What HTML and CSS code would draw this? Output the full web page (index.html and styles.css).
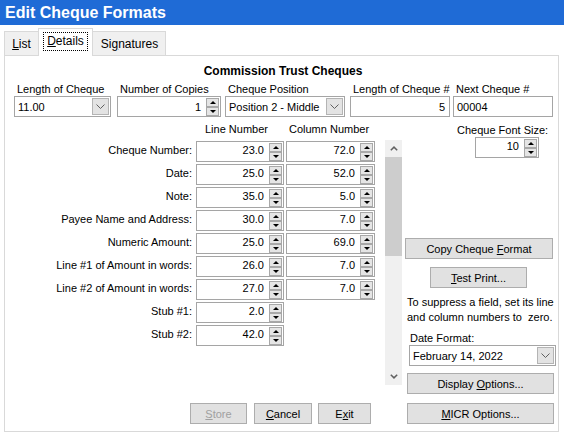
FILE: index.html
```html
<!DOCTYPE html>
<html>
<head>
<meta charset="utf-8">
<title>Edit Cheque Formats</title>
<link rel="stylesheet" href="styles.css">
</head>
<body>
<div class="titlebar">Edit Cheque Formats</div>
<div class="tabs">
  <div class="tab tab-list"><u>L</u>ist</div>
  <div class="tab tab-details"><span class="focus"><u>D</u>etails</span></div>
  <div class="tab tab-sig">Si<u>g</u>natures</div>
</div>
<div class="panel">
  <div class="heading">Commission Trust Cheques</div>
  <div class="toprow">
    <div class="field f1">
      <div class="flabel">Length of Cheque</div>
      <div class="box combo"><span>11.00</span><span class="dd"><svg width="9" height="5" viewBox="0 0 9 5"><path d="M0.5 0.5 L4.5 4.5 L8.5 0.5" stroke="#606060" fill="none"/></svg></span></div>
    </div>
    <div class="field f2">
      <div class="flabel">Number of Copies</div>
      <div class="box num spinbox"><span>1</span><span class="spin"><span class="up"><i></i></span><span class="down"><i></i></span></span></div>
    </div>
    <div class="field f3">
      <div class="flabel">Cheque Position</div>
      <div class="box combo"><span>Position 2 - Middle</span><span class="dd"><svg width="9" height="5" viewBox="0 0 9 5"><path d="M0.5 0.5 L4.5 4.5 L8.5 0.5" stroke="#606060" fill="none"/></svg></span></div>
    </div>
    <div class="field f4">
      <div class="flabel">Length of Cheque #</div>
      <div class="box num plain"><span>5</span></div>
    </div>
    <div class="field f5">
      <div class="flabel">Next Cheque #</div>
      <div class="box text"><span>00004</span></div>
    </div>
  </div>

  <div class="main">
    <div class="left">
      <div class="hdr">
        <div class="lbl"></div>
        <div class="hline">Line Number</div>
        <div class="hcol">Column Number</div>
      </div>
      <div class="row"><div class="lbl">Cheque Number:</div><div class="box num spinbox line"><span>23.0</span><span class="spin"><span class="up"><i></i></span><span class="down"><i></i></span></span></div><div class="box num spinbox col"><span>72.0</span><span class="spin"><span class="up"><i></i></span><span class="down"><i></i></span></span></div></div>
      <div class="row"><div class="lbl">Date:</div><div class="box num spinbox line"><span>25.0</span><span class="spin"><span class="up"><i></i></span><span class="down"><i></i></span></span></div><div class="box num spinbox col"><span>52.0</span><span class="spin"><span class="up"><i></i></span><span class="down"><i></i></span></span></div></div>
      <div class="row"><div class="lbl">Note:</div><div class="box num spinbox line"><span>35.0</span><span class="spin"><span class="up"><i></i></span><span class="down"><i></i></span></span></div><div class="box num spinbox col"><span>5.0</span><span class="spin"><span class="up"><i></i></span><span class="down"><i></i></span></span></div></div>
      <div class="row"><div class="lbl">Payee Name and Address:</div><div class="box num spinbox line"><span>30.0</span><span class="spin"><span class="up"><i></i></span><span class="down"><i></i></span></span></div><div class="box num spinbox col"><span>7.0</span><span class="spin"><span class="up"><i></i></span><span class="down"><i></i></span></span></div></div>
      <div class="row"><div class="lbl">Numeric Amount:</div><div class="box num spinbox line"><span>25.0</span><span class="spin"><span class="up"><i></i></span><span class="down"><i></i></span></span></div><div class="box num spinbox col"><span>69.0</span><span class="spin"><span class="up"><i></i></span><span class="down"><i></i></span></span></div></div>
      <div class="row"><div class="lbl">Line #1 of Amount in words:</div><div class="box num spinbox line"><span>26.0</span><span class="spin"><span class="up"><i></i></span><span class="down"><i></i></span></span></div><div class="box num spinbox col"><span>7.0</span><span class="spin"><span class="up"><i></i></span><span class="down"><i></i></span></span></div></div>
      <div class="row"><div class="lbl">Line #2 of Amount in words:</div><div class="box num spinbox line"><span>27.0</span><span class="spin"><span class="up"><i></i></span><span class="down"><i></i></span></span></div><div class="box num spinbox col"><span>7.0</span><span class="spin"><span class="up"><i></i></span><span class="down"><i></i></span></span></div></div>
      <div class="row"><div class="lbl">Stub #1:</div><div class="box num spinbox line"><span>2.0</span><span class="spin"><span class="up"><i></i></span><span class="down"><i></i></span></span></div></div>
      <div class="row"><div class="lbl">Stub #2:</div><div class="box num spinbox line"><span>42.0</span><span class="spin"><span class="up"><i></i></span><span class="down"><i></i></span></span></div></div>
      <div class="actions">
        <div class="btn store disabled"><span><u>S</u>tore</span></div>
        <div class="btn cancel"><span><u>C</u>ancel</span></div>
        <div class="btn exit"><span>E<u>x</u>it</span></div>
      </div>
    </div>

    <div class="scrollbar">
      <div class="sb-arrow"><svg width="8" height="5" viewBox="0 0 8 5"><path d="M0.8 4.3 L4 1.1 L7.2 4.3" stroke="#606060" stroke-width="1.5" fill="none"/></svg></div>
      <div class="sb-thumb"></div>
      <div class="sb-track"></div>
      <div class="sb-arrow"><svg width="8" height="5" viewBox="0 0 8 5"><path d="M0.8 0.7 L4 3.9 L7.2 0.7" stroke="#606060" stroke-width="1.5" fill="none"/></svg></div>
    </div>

    <div class="right">
      <div class="fs-label">Cheque Font Size:</div>
      <div class="box num spinbox fs-box"><span>10</span><span class="spin"><span class="up"><i></i></span><span class="down"><i></i></span></span></div>
      <div class="btn copy"><span>Copy Cheque <u>F</u>ormat</span></div>
      <div class="btn test"><span><u>T</u>est Print...</span></div>
      <div class="note">To suppress a field, set its line<br>and column numbers to &nbsp;zero.</div>
      <div class="df-label">Date Format:</div>
      <div class="box combo df-combo"><span>February 14, 2022</span><span class="dd"><svg width="9" height="5" viewBox="0 0 9 5"><path d="M0.5 0.5 L4.5 4.5 L8.5 0.5" stroke="#606060" fill="none"/></svg></span></div>
      <div class="btn display"><span>Display <u>O</u>ptions...</span></div>
      <div class="btn micr"><span><u>M</u>ICR Options...</span></div>
    </div>
  </div>
</div>
</body>
</html>
```
FILE: styles.css
```css
* { box-sizing: border-box; }

body {
  margin: 0;
  width: 564px;
  height: 434px;
  overflow: hidden;
  background: #ffffff;
  font-family: "Liberation Sans", Arial, sans-serif;
  font-size: 11px;
  color: #000;
}

u { text-decoration: underline; text-underline-offset: 1px; }

.titlebar {
  height: 25px;
  line-height: 25px;
  padding-left: 5px;
  background: #1f6bd6;
  color: #fff;
  font-size: 16px;
  font-weight: bold;
}

.tabs {
  display: flex;
  align-items: flex-end;
  height: 30px;
  padding-left: 4px;
}

.tab {
  height: 24px;
  border: 1px solid #d9d9d9;
  border-bottom: none;
  background: #f0f0f0;
  font-size: 12px;
  display: flex;
  align-items: center;
  justify-content: center;
}

.tab-list { width: 34px; border-right: none; }
.tab-sig { width: 73px; border-left: none; padding-left: 1px; }

.tab-details {
  width: 55px;
  height: 28px;
  background: #fff;
  margin-bottom: -1px;
  position: relative;
  z-index: 1;
}

.focus {
  border: 1px dotted #000;
  padding: 2px 3px;
  line-height: 13px;
  margin-top: -2px;
}

.panel {
  margin-left: 4px;
  width: 555px;
  height: 377px;
  border: 1px solid #d9d9d9;
  padding-top: 7px;
}

.heading {
  height: 16px;
  line-height: 16px;
  text-align: center;
  font-size: 12px;
  font-weight: bold;
  padding-left: 3px;
}

.toprow {
  display: flex;
  margin-top: 4px;
  padding-left: 9px;
}

.field { display: flex; flex-direction: column; }
.f1 { width: 97px; }
.f2 { width: 104px; margin-left: 6px; }
.f3 { width: 120px; margin-left: 4px; }
.f4 { width: 100px; margin-left: 5px; }
.f5 { width: 100px; margin-left: 3px; }

.flabel {
  height: 13px;
  line-height: 13px;
  padding-left: 3px;
  white-space: nowrap;
}

.box {
  height: 21px;
  border: 1px solid #a5a5a5;
  background: #fff;
  display: flex;
  align-items: center;
  padding: 0 3px;
  white-space: nowrap;
}

.box.num { justify-content: flex-end; }
.box.plain { padding-right: 4px; }
.box.spinbox { padding-right: 1px; }

.row .box > span:first-child,
.fs-box > span:first-child { padding-bottom: 3px; }

.combo { justify-content: space-between; padding-right: 1px; }

.dd {
  width: 17px;
  height: 17px;
  border: 1px solid #b4b4b4;
  background: #e3e3e3;
  display: flex;
  align-items: center;
  justify-content: center;
}

.spin {
  display: flex;
  flex-direction: column;
  width: 13px;
  margin-left: 5px;
}

.spin > span {
  height: 9px;
  border: 1px solid #a8a8a8;
  background: #e5e5e5;
  display: flex;
  align-items: center;
  justify-content: center;
}

.spin i {
  display: block;
  width: 0;
  height: 0;
  border-left: 3px solid transparent;
  border-right: 3px solid transparent;
}

.spin .up i { border-bottom: 3px solid #000; }
.spin .down i { border-top: 3px solid #000; }

.main {
  display: flex;
  margin-top: 6px;
}

.left {
  width: 371px;
  display: flex;
  flex-direction: column;
}

.hdr {
  display: flex;
  height: 13px;
  line-height: 13px;
  margin-bottom: 5px;
}

.hline { width: 88px; margin-left: 4px; padding-left: 9px; white-space: nowrap; }
.hcol { width: 89px; margin-left: 2px; padding-left: 3px; white-space: nowrap; }

.row {
  display: flex;
  height: 21px;
  margin-bottom: 2px;
}

.lbl {
  width: 187px;
  text-align: right;
  line-height: 18px;
  white-space: nowrap;
}

.line { width: 88px; margin-left: 4px; }
.col { width: 89px; margin-left: 2px; }

.actions {
  display: flex;
  margin-top: 55px;
  padding-left: 185px;
}

.btn {
  height: 21px;
  border: 1px solid #adadad;
  background: #e1e1e1;
  display: flex;
  align-items: center;
  justify-content: center;
  white-space: nowrap;
}

.btn.disabled { color: #a0a0a0; }
.store { width: 57px; }
.cancel { width: 58px; margin-left: 7px; }
.exit { width: 53px; margin-left: 6px; }

.scrollbar {
  width: 17px;
  height: 245px;
  margin-left: 9px;
  margin-top: 17px;
  display: flex;
  flex-direction: column;
  background: #f0f0f0;
}

.sb-arrow {
  height: 17px;
  display: flex;
  align-items: center;
  justify-content: center;
}

.sb-thumb { height: 99px; background: #cdcdcd; }
.sb-track { flex: 1; }

.right {
  width: 151px;
  margin-left: 3px;
  display: flex;
  flex-direction: column;
  align-items: flex-start;
}

.fs-label {
  margin-top: 1px;
  margin-left: 52px;
  height: 13px;
  line-height: 13px;
  white-space: nowrap;
}

.fs-box { width: 64px; margin-left: 70px; }

.copy { width: 148px; margin-top: 80px; }
.test { width: 97px; margin-top: 8px; margin-left: 25px; }

.note {
  margin-top: 7px;
  padding-left: 2px;
  line-height: 15px;
  white-space: nowrap;
}

.df-label {
  margin-top: 7px;
  padding-left: 5px;
  height: 13px;
  line-height: 13px;
}

.df-combo { width: 147px; margin-left: 4px; }

.display { width: 147px; margin-top: 7px; margin-left: 2px; }
.micr { width: 147px; margin-top: 9px; margin-left: 2px; }
```
